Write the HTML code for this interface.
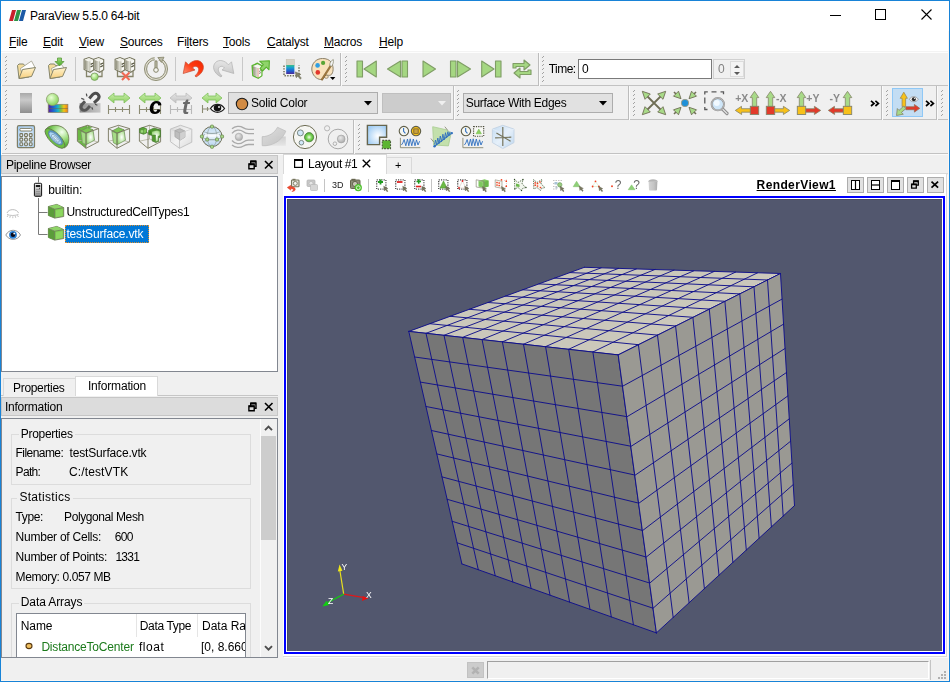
<!DOCTYPE html>
<html>
<head>
<meta charset="utf-8">
<title>ParaView 5.5.0 64-bit</title>
<style>
*{box-sizing:border-box;margin:0;padding:0}
html,body{width:950px;height:682px;overflow:hidden;background:#f0f0f0}
body{font-family:"Liberation Sans","DejaVu Sans",sans-serif;font-size:12px;color:#000;position:relative}
.abs{position:absolute}
svg{position:absolute;overflow:visible}
#win{position:absolute;left:0;top:0;width:950px;height:682px;background:#f0f0f0;overflow:hidden}
#frame{position:absolute;left:0;top:0;width:950px;height:682px;border:1px solid #1883d7;pointer-events:none;z-index:50}
#title{position:absolute;left:1px;top:1px;width:948px;height:30px;background:#fff}
#title .t{position:absolute;left:29px;top:7px;font-size:12px;line-height:16px;white-space:nowrap;letter-spacing:-0.25px}
#menu{position:absolute;left:1px;top:31px;width:948px;height:21px;background:#fff}
#menu span{position:absolute;top:3px;font-size:12px;line-height:16px;white-space:nowrap;letter-spacing:-0.2px}
#menu u{text-decoration:underline;text-underline-offset:1px}
.tbrow{position:absolute;left:1px;width:948px;height:34px;background:#f0f0f0;border-bottom:1px solid #c2c2c2;box-shadow:0 1px 0 #fafafa}
.grip{position:absolute;width:2px;height:26px;top:4px;background:repeating-linear-gradient(to bottom,#a2a2a2 0,#a2a2a2 1px,transparent 1px,transparent 4px) 1px 0/1px 100% no-repeat,repeating-linear-gradient(to bottom,#a2a2a2 0,#a2a2a2 1px,transparent 1px,transparent 4px) 0 1px/1px 25px no-repeat}
.vsep{position:absolute;width:1px;height:24px;top:5px;background:#c8c8c8}
.tsep{position:absolute;width:1px;height:34px;top:0;background:#bcbcbc;box-shadow:1px 0 0 #fafafa}
.ico{position:absolute;width:24px;height:24px;top:5px}
.lbl{position:absolute;white-space:nowrap;line-height:14px;font-size:12px;filter:grayscale(1)}
.dock{position:absolute;left:1px;width:277px;height:19px;background:#dcdcdc;border:1px solid #c6c6c6}
.gb{position:absolute;border:1px solid #dcdcdc}
.gbl{position:absolute;background:#f0f0f0;padding:0 2px;white-space:nowrap;line-height:14px;filter:grayscale(1)}
svg text{filter:grayscale(1)}
</style>
</head>
<body>
<div id="win">
 <div id="title">
  <svg style="left:8px;top:9px" width="17" height="12" viewBox="0 0 17 12"><path d="M3 0h4L4 11H0z" fill="#c8202c"/><path d="M8 0h4L9 11H5z" fill="#2e9447"/><path d="M13 0h4l-3 11h-4z" fill="#1c5aa6"/></svg>
  <div class="t">ParaView 5.5.0 64-bit</div>
  <svg style="left:829px;top:14px" width="12" height="2"><path d="M0 .5h11" stroke="#000" stroke-width="1"/></svg>
  <svg style="left:874px;top:8px" width="12" height="12"><rect x=".5" y=".5" width="10" height="10" fill="none" stroke="#000"/></svg>
  <svg style="left:920px;top:8px" width="12" height="12"><path d="M.5 .5l10 10M10.500 .5l-10 10" stroke="#000" stroke-width="1.1" fill="none"/></svg>
 </div>
 <div id="menu">
  <span style="left:8px"><u>F</u>ile</span>
  <span style="left:42px"><u>E</u>dit</span>
  <span style="left:78px"><u>V</u>iew</span>
  <span style="left:119px"><u>S</u>ources</span>
  <span style="left:176px">Fi<u>l</u>ters</span>
  <span style="left:222px"><u>T</u>ools</span>
  <span style="left:266px"><u>C</u>atalyst</span>
  <span style="left:323px"><u>M</u>acros</span>
  <span style="left:378px"><u>H</u>elp</span>
 </div>

 <svg width="0" height="0" style="left:0;top:0"><defs>
  <linearGradient id="gFold" x1="0" y1="0" x2="0" y2="1"><stop offset="0" stop-color="#fff3cf"/><stop offset="1" stop-color="#f7cf7d"/></linearGradient>
  <linearGradient id="gSrv" x1="0" y1="0" x2="1" y2="0"><stop offset="0" stop-color="#8f8f80"/><stop offset=".5" stop-color="#f4f4ee"/><stop offset="1" stop-color="#a5a596"/></linearGradient>
  <linearGradient id="gSrvL" x1="0" y1="0" x2="1" y2="0"><stop offset="0" stop-color="#8d8c78"/><stop offset="1" stop-color="#eeeee6"/></linearGradient>
  <linearGradient id="gGray" x1="0" y1="0" x2="0" y2="1"><stop offset="0" stop-color="#a9a9a9"/><stop offset=".35" stop-color="#c9c9c9"/><stop offset="1" stop-color="#8e8e8e"/></linearGradient>
  <linearGradient id="gRain" x1="0" y1="0" x2="1" y2="0"><stop offset="0" stop-color="#5a189a"/><stop offset=".25" stop-color="#1f5fd0"/><stop offset=".5" stop-color="#19b3c8"/><stop offset=".65" stop-color="#7cc043"/><stop offset=".8" stop-color="#f2c318"/><stop offset="1" stop-color="#f07a12"/></linearGradient>
  <linearGradient id="gGrn" x1="0" y1="0" x2="0" y2="1"><stop offset="0" stop-color="#c9efad"/><stop offset="1" stop-color="#8fd062"/></linearGradient>
  <linearGradient id="gGrn2" x1="0" y1="0" x2="0" y2="1"><stop offset="0" stop-color="#9ad978"/><stop offset="1" stop-color="#4aa82a"/></linearGradient>
  <linearGradient id="gCS" x1="0" y1="0" x2="0" y2="1"><stop offset="0" stop-color="#3bbf8a"/><stop offset=".3" stop-color="#1aa0d0"/><stop offset=".65" stop-color="#1f5fd0"/><stop offset="1" stop-color="#4a2a9a"/></linearGradient>
  <linearGradient id="gLnk" x1="0" y1="0" x2="1" y2="0"><stop offset="0" stop-color="#8c8c8c"/><stop offset=".6" stop-color="#b4b4b4"/><stop offset="1" stop-color="#c6c6c6"/></linearGradient>
  <linearGradient id="gGryA" x1="0" y1="0" x2="0" y2="1"><stop offset="0" stop-color="#e6e6e6"/><stop offset="1" stop-color="#c2c2c2"/></linearGradient>
  <linearGradient id="gRed" x1="0" y1="1" x2="1" y2="0"><stop offset="0" stop-color="#ffa48c"/><stop offset=".55" stop-color="#ff3a10"/><stop offset="1" stop-color="#f02800"/></linearGradient>
  <linearGradient id="gBlu" x1="0" y1="0" x2="0" y2="1"><stop offset="0" stop-color="#e2effb"/><stop offset="1" stop-color="#9cc6ee"/></linearGradient>
  <radialGradient id="gDome" cx=".7" cy=".3" r=".6"><stop offset="0" stop-color="#f4fff0"/><stop offset=".5" stop-color="#a5e088"/><stop offset="1" stop-color="#58b234"/></radialGradient>
  <radialGradient id="gGloss" cx=".55" cy=".5" r=".6"><stop offset="0" stop-color="#ffffff"/><stop offset="1" stop-color="#8fd46a"/></radialGradient>
  <linearGradient id="gSub" x1="0" y1="0" x2="1" y2="1"><stop offset="0" stop-color="#d9d9d9"/><stop offset=".5" stop-color="#f2f2f2"/><stop offset="1" stop-color="#dcdcdc"/></linearGradient>
  <linearGradient id="gSph" x1="0" y1="0" x2="0" y2="1"><stop offset="0" stop-color="#bcd8f0"/><stop offset=".5" stop-color="#e8f2fa"/><stop offset="1" stop-color="#b4d2ee"/></linearGradient>
  <linearGradient id="gWarp2" x1="0" y1="0" x2="1" y2="1"><stop offset="0" stop-color="#dedede"/><stop offset="1" stop-color="#c2c2c2"/></linearGradient>
  <linearGradient id="gWarp" x1="0" y1="0" x2="0" y2="1"><stop offset="0" stop-color="#cfcfcf"/><stop offset="1" stop-color="#e6e6e6"/></linearGradient>
  <linearGradient id="gPrb" x1="0" y1="0" x2="1" y2="1"><stop offset="0" stop-color="#c4dcf2"/><stop offset=".5" stop-color="#e6f0fa"/><stop offset="1" stop-color="#bcd6ee"/></linearGradient>
  <radialGradient id="gCalc" cx=".55" cy=".55" r=".65"><stop offset="0" stop-color="#ffffff"/><stop offset="1" stop-color="#a3cbf0"/></radialGradient>
  <radialGradient id="gBall" cx=".4" cy=".35" r=".7"><stop offset="0" stop-color="#e9ffd6"/><stop offset="1" stop-color="#7fce4e"/></radialGradient>
  <radialGradient id="gBall2" cx=".5" cy=".5" r=".55"><stop offset="0" stop-color="#f0ffe8"/><stop offset=".5" stop-color="#7fd45a"/><stop offset="1" stop-color="#3fa324"/></radialGradient>
  <radialGradient id="gGBall" cx=".4" cy=".35" r=".7"><stop offset="0" stop-color="#e8e8e8"/><stop offset="1" stop-color="#a9a9a9"/></radialGradient>
  <radialGradient id="gSq" cx=".55" cy=".55" r=".6"><stop offset="0" stop-color="#ffffff"/><stop offset="1" stop-color="#a3cef4"/></radialGradient>
 </defs></svg>
<div class="tbrow" style="top:52px;height:34px"><svg style="left:13px;top:5px" width="24" height="24" viewBox="0 0 24 24"><path d="M3.500 8.500L5 7h4.500l1 1.500H15V20L5 21.500z" fill="#f3dc9c" stroke="#85846a"/><path d="M6.500 11.500L17.500 4l3.500 6.500L8 17z" fill="#fff" stroke="#9d9c88" stroke-width=".8"/><path d="M5 21.500L8.500 12.500 21.500 10.500 17.500 19.500z" fill="url(#gFold)" stroke="#85846a" stroke-linejoin="round"/></svg><svg style="left:44px;top:5px" width="24" height="24" viewBox="0 0 24 24"><path d="M3.500 8.500L5 7h4.500l1 1.500H15V20L5 21.500z" fill="#f3dc9c" stroke="#85846a"/><path d="M6.500 11.500L16 7l3 4L8 17z" fill="#fff" stroke="#9d9c88" stroke-width=".8"/><path d="M5 21.500L8.500 12.500 21.500 10.500 17.500 19.500z" fill="url(#gFold)" stroke="#85846a" stroke-linejoin="round"/><path d="M12.500 1h4v3.500h2.500L14.500 9 10 4.500h2.500z" fill="url(#gGrn2)" stroke="#5a9a3c" stroke-width=".8"/></svg><div class="vsep" style="left:74px"></div><svg style="left:81px;top:5px" width="24" height="24" viewBox="0 0 24 24"><path d="M4.500 14v5.500h15.500V14" fill="none" stroke="#85846a" stroke-width="1.300"/><g transform="translate(0 0)"><path d="M2.100 2.300L7 .6 12 2.700V12.800L8 15.300 2.100 12.400z" fill="#fbfbf7" stroke="#77765e" stroke-width="1.100" stroke-linejoin="miter"/><path d="M2.700 2.900L7.600 4.600v10L2.700 12.100z" fill="url(#gSrvL)"/><path d="M3 2.500L7 1.300 11.200 2.900 7.800 4.100z" fill="#eeeee6"/><path d="M8.600 7.400l2.900-1.400M8.600 9.900l2.900-1.400" stroke="#55543f" stroke-width="1.200"/><path d="M7.900 4.300v10.700" stroke="#9a9984" stroke-width=".7"/></g><g transform="translate(9.7 0)"><path d="M2.100 2.300L7 .6 12 2.700V12.800L8 15.300 2.100 12.400z" fill="#fbfbf7" stroke="#77765e" stroke-width="1.100" stroke-linejoin="miter"/><path d="M2.700 2.900L7.600 4.600v10L2.700 12.100z" fill="url(#gSrvL)"/><path d="M3 2.500L7 1.300 11.200 2.900 7.800 4.100z" fill="#eeeee6"/><path d="M8.600 7.400l2.900-1.400M8.600 9.900l2.900-1.400" stroke="#55543f" stroke-width="1.200"/><path d="M7.900 4.300v10.700" stroke="#9a9984" stroke-width=".7"/></g><circle cx="12.600" cy="19.700" r="3.700" fill="url(#gBall)" stroke="#7a9a62" stroke-width=".8"/></svg><svg style="left:112px;top:5px" width="24" height="24" viewBox="0 0 24 24"><path d="M4.500 14v5.500h15.500V14" fill="none" stroke="#85846a" stroke-width="1.300"/><g transform="translate(0 0)"><path d="M2.100 2.300L7 .6 12 2.700V12.800L8 15.300 2.100 12.400z" fill="#fbfbf7" stroke="#77765e" stroke-width="1.100" stroke-linejoin="miter"/><path d="M2.700 2.900L7.600 4.600v10L2.700 12.100z" fill="url(#gSrvL)"/><path d="M3 2.500L7 1.300 11.200 2.900 7.800 4.100z" fill="#eeeee6"/><path d="M8.600 7.400l2.900-1.400M8.600 9.900l2.900-1.400" stroke="#55543f" stroke-width="1.200"/><path d="M7.900 4.300v10.700" stroke="#9a9984" stroke-width=".7"/></g><g transform="translate(9.7 0)"><path d="M2.100 2.300L7 .6 12 2.700V12.800L8 15.300 2.100 12.400z" fill="#fbfbf7" stroke="#77765e" stroke-width="1.100" stroke-linejoin="miter"/><path d="M2.700 2.900L7.600 4.600v10L2.700 12.100z" fill="url(#gSrvL)"/><path d="M3 2.500L7 1.300 11.200 2.900 7.800 4.100z" fill="#eeeee6"/><path d="M8.600 7.400l2.900-1.400M8.600 9.900l2.900-1.400" stroke="#55543f" stroke-width="1.200"/><path d="M7.900 4.300v10.700" stroke="#9a9984" stroke-width=".7"/></g><path d="M9 15.500l7.500 7.500M16.500 15.500L9 23" stroke="#f06a54" stroke-width="2.100"/></svg><svg style="left:143px;top:5px" width="24" height="24" viewBox="0 0 24 24"><circle cx="12" cy="12" r="10.500" fill="none" stroke="#dedccf" stroke-width="2.400"/><circle cx="12" cy="12" r="11.500" fill="none" stroke="#85846a" stroke-width=".9"/><circle cx="12" cy="12" r="9.400" fill="none" stroke="#85846a" stroke-width=".9"/><path d="M10.500 -1h5l-1 5.500h-3.500z" fill="#f0f0f0"/><path d="M13.800 .6l6.200-.4-2.600 5.200-1.200-2z" fill="#b9b8a4" stroke="#85846a" stroke-width=".8" stroke-linejoin="round"/><path d="M12 4.800v7" stroke="#85846a" stroke-width="3" stroke-linecap="round"/><path d="M12 5v7" stroke="#b9b8a4" stroke-width="1.300" stroke-linecap="round"/><circle cx="12" cy="13" r="2.300" fill="#f4f4ee" stroke="#85846a" stroke-width="1"/></svg><div class="vsep" style="left:174px"></div><svg style="left:180px;top:5px" width="24" height="24" viewBox="0 0 24 24"><path d="M2.200 16.500L4.500 4.800 7.500 7.800C11 3.500 17 2 20.500 5.500 24 9 23 16 15 20L14 18.800C18 15.500 18.500 11.500 16.500 10 14.500 8.500 12.500 9.500 11.500 11L14 13z" fill="url(#gRed)" stroke="#c8482c" stroke-width=".7" stroke-linejoin="round"/></svg><svg style="left:211px;top:5px" width="24" height="24" viewBox="0 0 24 24"><g transform="translate(24 0) scale(-1 1)"><path d="M2.200 16.500L4.500 4.800 7.500 7.800C11 3.500 17 2 20.500 5.500 24 9 23 16 15 20L14 18.800C18 15.500 18.500 11.500 16.500 10 14.500 8.500 12.500 9.500 11.500 11L14 13z" fill="url(#gGryA)" stroke="#b0b0b0" stroke-width=".7" stroke-linejoin="round"/></g></svg><div class="vsep" style="left:241px"></div><svg style="left:248px;top:5px" width="24" height="24" viewBox="0 0 24 24"><path d="M3.200 8.600L8.500 6.300l4.300 2.300v10L9.200 21.200 3.900 18.600z" fill="#f6f6f2" stroke="#5cb531" stroke-width="1.500" stroke-linejoin="round"/><path d="M3.900 9L9 11v9.500L4.500 18.300z" fill="url(#gSrvL)"/><path d="M9.300 11l3-1.800v9.300l-3 2z" fill="#fbfbf8"/><path d="M9.100 11v9.500" stroke="#e07a6a" stroke-width=".7"/><path d="M10 14.500l2-1M10 16.500l2-1" stroke="#6f6e58" stroke-width=".8"/><path d="M10.700 4.200L20.400 3.800 20 12.800 17.300 10.200 13.500 14 11 11.500 14.300 7.700z" fill="#8fd46a" stroke="#57b02e" stroke-width="1.100" stroke-linejoin="round"/></svg><svg style="left:279px;top:5px" width="24" height="24" viewBox="0 0 24 24"><rect x="6.200" y="2.300" width="8.200" height="6" fill="#d9d3c6" stroke="#c4beb0" stroke-width=".5"/><rect x="6.200" y="8" width="8.200" height="9" fill="url(#gCS)"/><path d="M4 8.500v10.300h15V8.500" fill="none" stroke="#6f6e58" stroke-width="1.500" stroke-dasharray="1.400 1.300"/><path d="M15.500 14.900l.8 5.800 1.500-1.600 2.500 3 1-.9-2.500-3 2-.8z" fill="#85846a" stroke="#6a6952" stroke-width=".6" stroke-linejoin="round"/></svg><svg style="left:310px;top:5px" width="24" height="24" viewBox="0 0 24 24"><path d="M11.500 1.500C5 1.500 .8 6.500 .8 12c0 6 5 10.500 9 10.500 2.200 0 2.800-1.500 3.300-2.800.6-1.500 1.800-1.700 3.200-1.500 1.500.2 3.300 .5 4.500-1.200C22.800 14 22.500 8.500 20 5 18 2.500 15 1.500 11.500 1.500z" fill="#f9e2bd" stroke="#8b8067" stroke-width="1"/><ellipse cx="15.300" cy="19.800" rx="2" ry="1.500" fill="#f9e2bd" stroke="#8b8067" stroke-width=".8"/><circle cx="6.600" cy="8.400" r="2.300" fill="#2f9fe2"/><circle cx="12.100" cy="5.900" r="2.100" fill="#5aa536"/><circle cx="6.800" cy="15.400" r="2.300" fill="#e2362a"/><path d="M19.300 8L10 22.600l1.300 .8L20.600 8.800z" fill="#a87c3e" stroke="#6e5225" stroke-width=".5"/><path d="M18.800 8.500C18.500 6 20 3.500 22.300 2.500c.5 2.500-.3 5-1.800 7z" fill="#f4f4f4" stroke="#85846a" stroke-width=".7"/></svg><div class="tsep" style="left:339px"></div><div class="grip" style="left:344px"></div><svg style="left:353.5px;top:5px" width="24" height="24" viewBox="0 0 24 24"><rect x="2" y="4" width="5.500" height="16" fill="#a5d782" stroke="#7f9d65" stroke-width="1.100" stroke-linejoin="round"/><path d="M21.300 4v16L9 12z" fill="#a5d782" stroke="#7f9d65" stroke-width="1.100" stroke-linejoin="round"/></svg><svg style="left:384.5px;top:5px" width="24" height="24" viewBox="0 0 24 24"><path d="M14.500 4v16L1.500 12z" fill="#a5d782" stroke="#7f9d65" stroke-width="1.100" stroke-linejoin="round"/><rect x="16" y="4" width="5.500" height="16" fill="#a5d782" stroke="#7f9d65" stroke-width="1.100" stroke-linejoin="round"/></svg><svg style="left:415.5px;top:5px" width="24" height="24" viewBox="0 0 24 24"><path d="M6 4v16l12.500-8z" fill="#a5d782" stroke="#7f9d65" stroke-width="1.100" stroke-linejoin="round"/></svg><svg style="left:446.5px;top:5px" width="24" height="24" viewBox="0 0 24 24"><rect x="2.500" y="4" width="5.500" height="16" fill="#a5d782" stroke="#7f9d65" stroke-width="1.100" stroke-linejoin="round"/><path d="M9.500 4v16l13-8z" fill="#a5d782" stroke="#7f9d65" stroke-width="1.100" stroke-linejoin="round"/></svg><svg style="left:477.5px;top:5px" width="24" height="24" viewBox="0 0 24 24"><path d="M2.700 4v16l12.300-8z" fill="#a5d782" stroke="#7f9d65" stroke-width="1.100" stroke-linejoin="round"/><rect x="16.500" y="4" width="5.500" height="16" fill="#a5d782" stroke="#7f9d65" stroke-width="1.100" stroke-linejoin="round"/></svg><svg style="left:508.5px;top:5px" width="24" height="24" viewBox="0 0 24 24"><path d="M3 11V6.500h11V3l6 5-6 5V9.500H6V11z" fill="#a5d782" stroke="#7f9d65" stroke-width="1.100" stroke-linejoin="round"/><path d="M21 13v4.500H10V21l-6-5 6-5v3.500h8V13z" fill="#a5d782" stroke="#7f9d65" stroke-width="1.100" stroke-linejoin="round"/></svg><div class="tsep" style="left:537px"></div><div class="grip" style="left:541px"></div><div class="grip" style="left:4px"></div><svg style="left:329px;top:25px" width="6" height="4"><path d="M0 0h5.400L2.700 3z" fill="#000"/></svg>
<div class="lbl" style="left:547.8px;top:10px;letter-spacing:-0.57px">Time:</div>
<div class="abs" style="left:577px;top:7px;width:134px;height:20px;background:#fff;border:1px solid #7a7a7a"><div class="lbl" style="left:3px;top:2px">0</div></div>
<div class="abs" style="left:712px;top:7px;width:32px;height:20px;background:#f0f0f0;border:1px solid #d0d0d0"><div class="lbl" style="left:4px;top:2px;color:#838383">0</div>
<div class="abs" style="left:16px;top:1px;width:14px;height:16px;border:1px solid #dcdcdc;background:#f4f4f4"></div>
<svg style="left:19px;top:4px" width="8" height="12"><path d="M1 4l3-3 3 3zM1 8l3 3 3-3z" fill="#5a5a5a"/></svg></div>
</div>
<div class="tbrow" style="top:86px;height:34px"><div class="grip" style="left:4px"></div><svg style="left:13px;top:5px" width="24" height="24" viewBox="0 0 24 24"><rect x="6" y="2" width="12" height="20" fill="url(#gGray)"/></svg><svg style="left:44px;top:5px" width="24" height="24" viewBox="0 0 24 24"><rect x="3.200" y="13.300" width="19.700" height="8.200" fill="url(#gRain)" stroke="#85846a" stroke-width=".7"/><path d="M3.200 17.400h19.700" stroke="#6a6952" stroke-width=".7" opacity=".8"/><circle cx="7.500" cy="8.500" r="6.100" fill="url(#gBall)" stroke="#8a9a6a" stroke-width=".8"/></svg><svg style="left:75.5px;top:5px" width="24" height="24" viewBox="0 0 24 24"><rect x="2.600" y="12.200" width="20.900" height="9.400" fill="url(#gLnk)"/><path d="M2.600 17h20.900" stroke="#d0d0d0" stroke-width=".5" opacity=".6"/><path d="M12.300 7.500L15.500 3.800c1.500-1.700 3.800-2 5.300-.7 1.600 1.400 1.500 3.500.2 5.100L17 11.800" fill="none" stroke="#4d4d4d" stroke-width="3" stroke-linecap="butt"/><path d="M8 10.300L5.200 13.300c-1.500 1.700-1.600 3.800-.2 5.100 1.500 1.400 3.700 1.200 5.200-.4l2.800-3.100" fill="none" stroke="#565656" stroke-width="3" stroke-linecap="butt"/><path d="M9.300 2.700l.7 2.700M4.300 7.400l3 1.100M18.100 13.200l2.300 1M14.700 16.200l1 2.400" stroke="#4a4a4a" stroke-width="1.200"/></svg><svg style="left:106px;top:5px" width="24" height="24" viewBox="0 0 24 24"><path d="M1 7l6-5v3h10V2l6 5-6 5V9H7v3z" fill="url(#gGrn)" stroke="#7fbf5a" stroke-width=".8" stroke-linejoin="round"/><path d="M1.500 14v9M22.500 14v9M1.500 18.500h21M8.500 16v5M15.500 16v5" stroke="#8c8b73" stroke-width="1.100" fill="none"/></svg><svg style="left:137px;top:5px" width="24" height="24" viewBox="0 0 24 24"><path d="M1 7l6-5v3h10V2l6 5-6 5V9H7v3z" fill="url(#gGrn)" stroke="#7fbf5a" stroke-width=".8" stroke-linejoin="round"/><path d="M1.500 14v9M22.500 14v9M1.500 18.500h21M8.500 16v5M15.500 16v5" stroke="#8c8b73" stroke-width="1.100" fill="none"/><text x="11" y="22.500" font-family="Liberation Sans,sans-serif" font-weight="bold" font-style="italic" font-size="23" fill="#000">c</text></svg><svg style="left:168px;top:5px" width="24" height="24" viewBox="0 0 24 24"><path d="M1 7l6-5v3h10V2l6 5-6 5V9H7v3z" fill="url(#gGryA)" stroke="#bdbdbd" stroke-width=".8" stroke-linejoin="round"/><path d="M1.500 14v9M22.500 14v9M1.500 18.500h21M8.500 16v5M15.500 16v5" stroke="#b9b9b9" stroke-width="1.100" fill="none"/><text x="13" y="22.500" font-family="Liberation Sans,sans-serif" font-weight="bold" font-style="italic" font-size="22" fill="#6a6a6a">t</text></svg><svg style="left:199.5px;top:5px" width="24" height="24" viewBox="0 0 24 24"><path d="M1 7l6-5v3h8V2l6 5-6 5V9H7v3z" fill="url(#gGrn)" stroke="#7fbf5a" stroke-width=".8" stroke-linejoin="round"/><path d="M1.500 14v8M1.500 18h7M6.500 16v4" stroke="#8c8b73" stroke-width="1.100" fill="none"/><path d="M9.500 17.500c3.500-5.500 10.500-5.500 14 0-3.500 5-10.500 5-14 0z" fill="#fff" stroke="#222" stroke-width="1.300"/><ellipse cx="16.500" cy="17" rx="3.800" ry="3.200" fill="#111"/><circle cx="18" cy="16" r=".9" fill="#fff"/></svg><div class="tsep" style="left:452px"></div><div class="grip" style="left:456px"></div><div class="tsep" style="left:627px"></div><div class="grip" style="left:632px"></div><svg style="left:641px;top:5px" width="24" height="24" viewBox="0 0 24 24"><path d="M4 4l16 16M20 4L4 20" stroke="#6f6e55" stroke-width="1.800"/><path d="M.3 .3L8.300 3 3 8.300z" fill="#a8da88" stroke="#6f6e55" stroke-width=".9" stroke-linejoin="round"/><path d="M23.700 .3L15.700 3 21 8.300z" fill="#a8da88" stroke="#6f6e55" stroke-width=".9" stroke-linejoin="round"/><path d="M.3 23.700L8.300 21 3 15.700z" fill="#a8da88" stroke="#6f6e55" stroke-width=".9" stroke-linejoin="round"/><path d="M23.700 23.700L15.700 21 21 15.700z" fill="#a8da88" stroke="#6f6e55" stroke-width=".9" stroke-linejoin="round"/></svg><svg style="left:672px;top:5px" width="24" height="24" viewBox="0 0 24 24"><path d="M1 1l4 4M23 1l-4 4M1 23l4-4M23 23l-4-4" stroke="#6f6e55" stroke-width="1.600"/><path d="M8 7.700L.5 5.200 5.500 .2z" fill="#a8da88" stroke="#6f6e55" stroke-width=".9" stroke-linejoin="round"/><path d="M16 7.700l7.500-2.500-5-5z" fill="#a8da88" stroke="#6f6e55" stroke-width=".9" stroke-linejoin="round"/><path d="M8 16.300L.5 18.800l5 5z" fill="#a8da88" stroke="#6f6e55" stroke-width=".9" stroke-linejoin="round"/><path d="M16 16.300l7.500 2.500-5 5z" fill="#a8da88" stroke="#6f6e55" stroke-width=".9" stroke-linejoin="round"/><circle cx="12" cy="12" r="3.700" fill="#1e90d8" stroke="#a89a78" stroke-width=".8"/></svg><svg style="left:703px;top:5px" width="24" height="24" viewBox="0 0 24 24"><path d="M.8 3.500V.8h3M7.500 .8h5M16.500 .8h3v2.500M.8 6.500v6M.8 16v2.500h2.700" fill="none" stroke="#5a5a5a" stroke-width="1.300"/><path d="M18.500 18l4.500 4.500" stroke="#8a8a8a" stroke-width="3.200" stroke-linecap="round"/><path d="M18.500 18l4.500 4.500" stroke="#e4e4e4" stroke-width="1.200" stroke-linecap="round"/><circle cx="13.800" cy="13.200" r="6.200" fill="#cfe6f8" stroke="#8f8f8f" stroke-width="1.900"/><circle cx="13.800" cy="13.200" r="6.200" fill="none" stroke="#d9d9d9" stroke-width=".6"/><circle cx="12.800" cy="12" r="3" fill="#f4fbff" opacity=".9"/></svg><svg style="left:734px;top:5px" width="24" height="24" viewBox="0 0 24 24"><text x="0.2" y="10.800" font-family="Liberation Sans,sans-serif" font-weight="bold" font-size="10.500" fill="#8a8a8a">+X</text><path d="M17.3 15.500V6.600h-2.100L19.5 .3 23.8 6.600h-2.100V15.500z" fill="#a8da88" stroke="#85846a" stroke-width=".8" stroke-linejoin="round"/><path d="M15.5 17.700h-9v-2.400L.3 19.400l6.300 4.100v-2.300h9z" fill="#f7c11a" stroke="#85846a" stroke-width=".8" stroke-linejoin="round"/><rect x="15.3" y="15.300" width="8.400" height="8.200" fill="#e23a2a" stroke="#85846a" stroke-width=".9"/></svg><svg style="left:765px;top:5px" width="24" height="24" viewBox="0 0 24 24"><text x="10" y="10.800" font-family="Liberation Sans,sans-serif" font-weight="bold" font-size="10.500" fill="#8a8a8a">-X</text><path d="M2.3 15.500V6.600h-2.100L4.5 .3 8.8 6.600h-2.100V15.500z" fill="#a8da88" stroke="#85846a" stroke-width=".8" stroke-linejoin="round"/><path d="M8.4 17.700h9v-2.400l6.300 4.100-6.300 4.100v-2.300h-9z" fill="#f7c11a" stroke="#85846a" stroke-width=".8" stroke-linejoin="round"/><rect x="0.3" y="15.300" width="8.400" height="8.200" fill="#e23a2a" stroke="#85846a" stroke-width=".9"/></svg><svg style="left:796px;top:5px" width="24" height="24" viewBox="0 0 24 24"><text x="9.3" y="10.800" font-family="Liberation Sans,sans-serif" font-weight="bold" font-size="10.500" fill="#8a8a8a">+Y</text><path d="M2.3 15.500V6.600h-2.100L4.5 .3 8.8 6.600h-2.100V15.500z" fill="#a8da88" stroke="#85846a" stroke-width=".8" stroke-linejoin="round"/><path d="M8.4 17.700h9v-2.400l6.300 4.100-6.300 4.100v-2.300h-9z" fill="#e23a2a" stroke="#85846a" stroke-width=".8" stroke-linejoin="round"/><rect x="0.3" y="15.300" width="8.400" height="8.200" fill="#f7c11a" stroke="#85846a" stroke-width=".9"/></svg><svg style="left:827px;top:5px" width="24" height="24" viewBox="0 0 24 24"><text x="1.5" y="10.800" font-family="Liberation Sans,sans-serif" font-weight="bold" font-size="10.500" fill="#8a8a8a">-Y</text><path d="M17.3 15.500V6.600h-2.100L19.5 .3 23.8 6.600h-2.100V15.500z" fill="#a8da88" stroke="#85846a" stroke-width=".8" stroke-linejoin="round"/><path d="M15.5 17.700h-9v-2.400L.3 19.400l6.300 4.100v-2.300h9z" fill="#e23a2a" stroke="#85846a" stroke-width=".8" stroke-linejoin="round"/><rect x="15.3" y="15.300" width="8.400" height="8.200" fill="#f7c11a" stroke="#85846a" stroke-width=".9"/></svg><div class="tsep" style="left:880px"></div><div class="grip" style="left:885px"></div><div class="tsep" style="left:935px"></div><div class="grip" style="left:940px"></div><div class="abs" style="left:227px;top:6px;width:150px;height:22px;background:#e1e1e1;border:1px solid #adadad">
<svg style="left:6px;top:4px" width="14" height="14"><circle cx="7" cy="7" r="5.700" fill="#d18b44" stroke="#1a1a1a" stroke-width="1.100"/></svg>
<div class="lbl" style="left:22px;top:3px;letter-spacing:-0.21px">Solid Color</div>
<svg style="left:135px;top:8px" width="9" height="5"><path d="M0 0h8L4 4.500z" fill="#000"/></svg></div>
<div class="abs" style="left:381px;top:7px;width:69px;height:20px;background:#cccccc;border:1px solid #bfbfbf">
<svg style="left:55px;top:7px" width="9" height="5"><path d="M0 0h8L4 4.500z" fill="#f0f0f0"/></svg></div>
<div class="abs" style="left:462px;top:7px;width:150px;height:20px;background:#e1e1e1;border:1px solid #adadad">
<div class="lbl" style="left:1.7px;top:2px;letter-spacing:-0.3px">Surface With Edges</div>
<svg style="left:135px;top:7px" width="9" height="5"><path d="M0 0h8L4 4.500z" fill="#000"/></svg></div>
<svg style="left:869px;top:14px" width="10" height="7"><path d="M1 .8l3 2.600-3 2.600M5.400 .8l3 2.600-3 2.600" fill="none" stroke="#000" stroke-width="1.700"/></svg>
<div class="abs" style="left:891px;top:2px;width:31px;height:29px;background:#c3ddf3;border:1px solid #8fc8f6"></div>
<svg style="left:924px;top:14px" width="10" height="7"><path d="M1 .8l3 2.600-3 2.600M5.400 .8l3 2.600-3 2.600" fill="none" stroke="#000" stroke-width="1.700"/></svg>
<svg style="left:894px;top:5px" width="24" height="24" viewBox="0 0 24 24"><path d="M7.100 15.600V7.300H5.200L8.800 1.200 12.400 7.300h-1.800v8.300z" fill="#f7c11a" stroke="#a08a4a" stroke-width=".8" stroke-linejoin="round"/><path d="M10.900 15.800h8.500v-2.300l5.300 3.800-5.300 3.800v-2.400h-8.500z" fill="#e23a2a" stroke="#9a6a50" stroke-width=".8" stroke-linejoin="round"/><path d="M8.500 15.300L4 19.400 2.300 17.500 1.500 24.500 8.300 23.200 6.400 21.400 11 17.500z" fill="#a8da88" stroke="#85846a" stroke-width=".8" stroke-linejoin="round"/><path d="M14.300 8.300c2.200-3.600 6.800-3.600 9 0-2.200 3.300-6.800 3.300-9 0z" fill="#f4f4f4" stroke="#8a8a8a" stroke-width=".7"/><circle cx="18.800" cy="8.200" r="2" fill="#2a2a2a"/><circle cx="19.500" cy="7.500" r=".6" fill="#fff"/></svg></div>
<div class="tbrow" style="top:120px;height:34px"><div class="grip" style="left:4px"></div><svg style="left:13px;top:5px" width="24" height="24" viewBox="0 0 24 24"><rect x="3.400" y=".7" width="17.100" height="22" rx="1.500" fill="url(#gCalc)" stroke="#7f7e66" stroke-width="1.200"/><rect x="5.800" y="3.400" width="12.200" height="2.600" rx="1.300" fill="#fff" stroke="#7f7e66" stroke-width="1"/><rect x="5.9" y="8.6" width="2.800" height="3" rx=".9" fill="#dfe8f0" stroke="#77765e" stroke-width="1.100"/><rect x="5.9" y="13.15" width="2.800" height="3" rx=".9" fill="#dfe8f0" stroke="#77765e" stroke-width="1.100"/><rect x="5.9" y="17.7" width="2.800" height="3" rx=".9" fill="#dfe8f0" stroke="#77765e" stroke-width="1.100"/><rect x="10.6" y="8.6" width="2.800" height="3" rx=".9" fill="#dfe8f0" stroke="#77765e" stroke-width="1.100"/><rect x="10.6" y="13.15" width="2.800" height="3" rx=".9" fill="#dfe8f0" stroke="#77765e" stroke-width="1.100"/><rect x="10.6" y="17.7" width="2.800" height="3" rx=".9" fill="#dfe8f0" stroke="#77765e" stroke-width="1.100"/><rect x="15.3" y="8.6" width="2.800" height="3" rx=".9" fill="#dfe8f0" stroke="#77765e" stroke-width="1.100"/><rect x="15.3" y="13.15" width="2.800" height="3" rx=".9" fill="#dfe8f0" stroke="#77765e" stroke-width="1.100"/><rect x="15.3" y="17.7" width="2.800" height="3" rx=".9" fill="#dfe8f0" stroke="#77765e" stroke-width="1.100"/></svg><svg style="left:44px;top:5px" width="24" height="24" viewBox="0 0 24 24"><path d="M.7 4.300C5-1.500 17-1 21.500 6c4 6.500 2.500 15-2.400 17z" fill="url(#gDome)" stroke="#6f7f55" stroke-width=".9"/><ellipse cx="9.900" cy="13.400" rx="5.200" ry="13" transform="rotate(-45 9.900 13.400)" fill="#6cbf42" stroke="#667a50" stroke-width=".9"/><ellipse cx="10.600" cy="12.700" rx="3.900" ry="9.300" transform="rotate(-45 10.600 12.700)" fill="#4f9fe0" stroke="#5f7f9a" stroke-width=".6"/><ellipse cx="10.200" cy="13.100" rx="3.300" ry="8.200" transform="rotate(-45 10.200 13.100)" fill="#a9d6f6" stroke="#5f7f9a" stroke-width=".7"/><ellipse cx="10.400" cy="13.300" rx="2" ry="5" transform="rotate(-45 10.400 13.300)" fill="#c9e6fa" stroke="#6f8faa" stroke-width=".7"/><ellipse cx="10.500" cy="13.400" rx=".9" ry="2.400" transform="rotate(-45 10.500 13.400)" fill="#e6f4fd" stroke="#7f9fba" stroke-width=".6"/></svg><svg style="left:75px;top:5px" width="24" height="24" viewBox="0 0 24 24"><path d="M1.400 3.600L11.500 .3 16.500 2.300 4.900 6.100 6.400 17.700 10 19.700V23.300L1.400 16.200z" fill="#6ab844"/><path d="M11.500 .3V14L1.400 16.200M11.500 14l11.100 3.200" fill="none" stroke="#b4b4a0" stroke-width=".8"/><path d="M4.900 6.100L11.500 2.600 17 4.800 10 8.500z" fill="#7cc653"/><path d="M4.900 6.100L10 8.500V19.700L6.400 17.700z" fill="#a5dc86"/><path d="M10 8.500L17 4.800 18.500 15.200 10 19.700z" fill="url(#gGloss)"/><path d="M4.900 6.100L11.500 2.600 17 4.800 18.500 15.200 10 19.700 6.400 17.700zM4.900 6.100L10 8.500 17 4.800M10 8.500V19.700" fill="none" stroke="#6a8a55" stroke-width=".7" stroke-linejoin="round"/><path d="M1.400 3.600L11.500 .3 22.600 3.600V16.700L10 23.300 1.400 16.200zM1.400 3.600L10 8.100 22.600 3.600M10 8.100V23.300" fill="none" stroke="#77765e" stroke-width=".9" stroke-linejoin="round"/></svg><svg style="left:106px;top:5px" width="24" height="24" viewBox="0 0 24 24"><path d="M11.500 .3V14L1.400 16.200M11.500 14l11.100 3.200" fill="none" stroke="#b4b4a0" stroke-width=".8"/><path d="M4.900 6.100L11.500 2.600 17 4.800 10 8.500z" fill="#7cc653"/><path d="M4.900 6.100L10 8.500V19.700L6.400 17.700z" fill="#a5dc86"/><path d="M10 8.500L17 4.800 18.500 15.200 10 19.700z" fill="url(#gGloss)"/><path d="M4.900 6.100L11.500 2.600 17 4.800 18.500 15.200 10 19.700 6.400 17.700zM4.900 6.100L10 8.500 17 4.800M10 8.500V19.700" fill="none" stroke="#6a8a55" stroke-width=".7" stroke-linejoin="round"/><path d="M1.400 3.600L11.500 .3 22.600 3.600V16.700L10 23.300 1.400 16.200zM1.400 3.600L10 8.100 22.600 3.600M10 8.100V23.300" fill="none" stroke="#77765e" stroke-width=".9" stroke-linejoin="round"/></svg><svg style="left:137px;top:5px" width="24" height="24" viewBox="0 0 24 24"><path d="M11.500 .3V14L1.400 16.200M11.500 14l11.100 3.200" fill="none" stroke="#b4b4a0" stroke-width=".8"/><path d="M1.400 3.600L11.500 .3 22.600 3.600V16.700L10 23.300 1.400 16.200zM1.400 3.600L10 8.100 22.600 3.600M10 8.100V23.300" fill="none" stroke="#77765e" stroke-width=".9" stroke-linejoin="round"/><path d="M1.600 4L5 2.300 8.600 3.800V8L5.500 9.300 1.600 7.800z" fill="#5aa836" stroke="#4a7a35" stroke-width=".7" stroke-linejoin="round"/><path d="M2.300 4.800h3.400v3.200H2.300z" fill="#9ad978" stroke="#4a7a35" stroke-width=".5"/><path d="M6 4.800l2-.8v3.200l-2 .9z" fill="#7cc653"/><path d="M10.600 5.500L16 3l6.500 2v7l-1.800 1v3.200L18 17.500 14.200 16V10.500L10.600 9.500z" fill="#4f9a2e" stroke="#4a7a35" stroke-width=".7" stroke-linejoin="round"/><path d="M13.500 6.500l5.500-1.300 3 1v4.300l-1.800.8V16l-2.700 1V10h-4z" fill="url(#gGloss)" stroke="#4a7a35" stroke-width=".5"/><path d="M11.200 6l2.300.6V10l-2.300-.8z" fill="#3f8a20"/></svg><svg style="left:168px;top:5px" width="24" height="24" viewBox="0 0 24 24"><path d="M1.400 4.100L11.500 .3 22.800 4.100V17.200L10.500 23.300 1.400 16.700z" fill="url(#gSub)" stroke="#bdbdbd" stroke-width=".9" stroke-linejoin="round"/><path d="M10.500 15.200V23.300" stroke="#bdbdbd" stroke-width=".8"/><path d="M1.400 4.100l4.500 1.600M22.800 4.100L16 6.300" stroke="#cfcfcf" stroke-width=".7"/><path d="M5.900 5.600L11 3.600 16 6.100V12.200L11 15.200 5.900 11.700z" fill="#bcbcbc" stroke="#a5a5a5" stroke-width=".7" stroke-linejoin="round"/><path d="M5.900 5.600L11 8 16 6.100M11 8v7.200" fill="none" stroke="#a5a5a5" stroke-width=".7"/><path d="M11 8L16 6.100V12.200L11 15.200z" fill="#d9d9d9" opacity=".7"/></svg><svg style="left:199px;top:5px" width="24" height="24" viewBox="0 0 24 24"><circle cx="12" cy="11.600" r="10" fill="url(#gSph)" stroke="#6f6e55" stroke-width="1"/><ellipse cx="12" cy="11.600" rx="4.800" ry="10" fill="none" stroke="#8f9f9f" stroke-width=".7"/><path d="M3.500 6.500c5 2.500 12 2.500 17 0M3.500 16.700c5-2.500 12-2.500 17 0" fill="none" stroke="#8f9f9f" stroke-width=".7"/><ellipse cx="12" cy="11.600" rx="10" ry="3" fill="none" stroke="#8f9f9f" stroke-width=".7"/><path d="M5 8.200c4 1.600 10 1.600 14 0v2.500c-4 1.500-10 1.500-14 0z" fill="#fff" opacity=".7"/><rect x="10.5" y="0.1" width="3" height="3" rx=".9" fill="#a8da88" stroke="#6f8a55" stroke-width=".8"/><rect x="10.5" y="20.3" width="3" height="3" rx=".9" fill="#a8da88" stroke="#6f8a55" stroke-width=".8"/><rect x="0.4" y="10" width="3" height="3" rx=".9" fill="#a8da88" stroke="#6f8a55" stroke-width=".8"/><rect x="20.6" y="10" width="3" height="3" rx=".9" fill="#a8da88" stroke="#6f8a55" stroke-width=".8"/><rect x="5.7" y="13" width="3" height="3" rx=".9" fill="#a8da88" stroke="#6f8a55" stroke-width=".8"/><rect x="15.5" y="13" width="3" height="3" rx=".9" fill="#a8da88" stroke="#6f8a55" stroke-width=".8"/></svg><svg style="left:230px;top:5px" width="24" height="24" viewBox="0 0 24 24"><path d="M1 3.800C4 1.200 9 .6 12 2.600c2 1.300 3.500 1.700 5.500 1.700H23M1 8.300C4 4.800 9 4.200 12 6.500c2 1.500 3.500 2.100 5.500 2.100H23M1 15.500c3 3.500 8 4.100 11 1.800 2-1.500 3.500-2.100 5.500-2.100H23M1 20c3 2.600 8 3.200 11 1.200 2-1.300 3.500-1.700 5.500-1.700H23" fill="none" stroke="#a9a9a9" stroke-width="1.300"/><circle cx="7.900" cy="11.900" r="3.700" fill="url(#gGBall)" stroke="#a9a9a9" stroke-width=".7"/></svg><svg style="left:261px;top:5px" width="24" height="24" viewBox="0 0 24 24"><path d="M.2 11.500h23.600v9.300H.2z" fill="url(#gWarp)"/><path d="M.2 11.700C7 11.500 12.500 8 15.500 2.300l8.300 3.800C21 13.500 14 19.500 4 20.700H.2z" fill="url(#gWarp2)" stroke="#bcbcbc" stroke-width=".8" opacity=".95"/></svg><svg style="left:292px;top:5px" width="24" height="24" viewBox="0 0 24 24"><circle cx="12" cy="12" r="11.600" fill="#f6f6f2" stroke="#6f6e55" stroke-width="1"/><circle cx="16.100" cy="12.200" r="4.600" fill="url(#gBall2)" stroke="#4e7f3e" stroke-width=".8"/><circle cx="7.400" cy="7.900" r="3" fill="#d2e8f8" stroke="#6f7f7a" stroke-width=".9"/><circle cx="8.400" cy="17.700" r="2.300" fill="#d2e8f8" stroke="#6f7f7a" stroke-width=".9"/></svg><svg style="left:323px;top:5px" width="24" height="24" viewBox="0 0 24 24"><circle cx="14" cy="14" r="9.800" fill="none" stroke="#a9a9a9" stroke-width="1"/><circle cx="17.200" cy="14" r="3.900" fill="url(#gGBall)" stroke="#a5a5a5" stroke-width=".7"/><circle cx="3.100" cy="3.300" r="2.600" fill="none" stroke="#b0b0b0" stroke-width=".9"/><circle cx="10.900" cy="18.700" r="1.800" fill="none" stroke="#a9a9a9" stroke-width=".9"/></svg><div class="tsep" style="left:352px"></div><div class="grip" style="left:357px"></div><svg style="left:366px;top:5px" width="24" height="24" viewBox="0 0 24 24"><path d="M.4 .4H19.600V12.200H12.600V19.600H.4z" fill="url(#gSq)" stroke="#66654e" stroke-width="1.400"/><rect x="15.300" y="15.400" width="8.200" height="8.200" fill="#5cb531"/><rect x="15.300" y="15.400" width="8.200" height="8.200" fill="none" stroke="#4a5a3a" stroke-width="1.100" stroke-dasharray="1.800 1.200"/></svg><svg style="left:397px;top:5px" width="24" height="24" viewBox="0 0 24 24"><circle cx="5.9" cy="6.100" r="4.700" fill="#f6f6f0" stroke="#5f5e48" stroke-width="1.100"/><path d="M5.6 3v3.300l1.800 2" fill="none" stroke="#2f6fc0" stroke-width="1.100"/><circle cx="18" cy="6.100" r="4.700" fill="#f7c11a" stroke="#5f5e48" stroke-width="1.100"/><rect x="15.800" y="3.900" width="4.400" height="4.400" fill="#b8923a" stroke="#6a5a30" stroke-width=".7"/><path d="M16.500 5h3M16.500 6.200h3M16.500 7.300h3" stroke="#e0b84a" stroke-width=".5"/><path d="M2.4 12.800V22.700H22.300" fill="none" stroke="#8a8972" stroke-width=".9"/><path d="M3.400 20l1.400-2 1.300-3.500 1.700 6.300 1.700-6.800 1.300 6.800 1.400-7 1.600 7 1.500-6.800 1.700 6.800 1.500-6 1.500 5.200 1.600-3.800" fill="none" stroke="#2f6fc0" stroke-width=".9" stroke-linejoin="round"/></svg><svg style="left:428.5px;top:5px" width="24" height="24" viewBox="0 0 24 24"><path d="M2.700 1.700L16.400 4.800 21.100 8.100 18.400 20.900 3.600 20z" fill="#c3e0ac" stroke="#a8cc90" stroke-width=".8"/><path d="M.9 13.500l2.700 3.400M14.800 1.700l3 3.700" stroke="#6f6e55" stroke-width=".7"/><path d="M4.500 21.300L21.800 8.100" stroke="#2f6fc0" stroke-width="1.100"/><path d="M4.500 19.500l1-4.500 1 5 1.300-7 1.200 5.500 1.300-7.500 1.200 5.800 1.400-7.600 1.200 5.800 1.400-7.300 1 5.300 1.400-6.300 .9 4.300 1.300-4.300" fill="none" stroke="#2f6fc0" stroke-width=".9" stroke-linejoin="round"/><circle cx="4.500" cy="21.300" r="1.200" fill="#2f6fc0"/><circle cx="21.800" cy="8.100" r="1.200" fill="#2f6fc0"/></svg><svg style="left:459.5px;top:5px" width="24" height="24" viewBox="0 0 24 24"><circle cx="4.95" cy="6.100" r="4.700" fill="#f6f6f0" stroke="#5f5e48" stroke-width="1.100"/><path d="M4.65 3v3.300l1.800 2" fill="none" stroke="#2f6fc0" stroke-width="1.100"/><rect x="12.600" y="1.600" width="10.100" height="9.700" fill="#f8f8f4" stroke="#4a4a3a" stroke-width="1.100" stroke-dasharray="1.200 1.100"/><path d="M15.100 8.800l2.700-4.700 2.600 4.700z" fill="#8fd062" stroke="#6ab844" stroke-width=".5"/><path d="M1.9 12.800V22.700H22.300" fill="none" stroke="#8a8972" stroke-width=".9"/><path d="M3.400 20l1.400-2 1.300-3.500 1.700 6.300 1.700-6.800 1.300 6.800 1.400-7 1.600 7 1.500-6.800 1.700 6.800 1.500-6 1.500 5.200 1.600-3.800" fill="none" stroke="#2f6fc0" stroke-width=".9" stroke-linejoin="round"/></svg><svg style="left:490px;top:5px" width="24" height="24" viewBox="0 0 24 24"><path d="M1.400 4.100L11.800 .3 23 4.100V17.600L11.800 23.600 1.400 17.600z" fill="url(#gPrb)" stroke="#c3d3e3" stroke-width=".9" stroke-linejoin="round"/><path d="M1.400 4.100L11.800 8.500 23 4.100M11.800 8.500v15" fill="none" stroke="#e4eef8" stroke-width=".8"/><path d="M11.800 2.100V20.900M4.100 12.800l16.200-.6M5.400 8.100l14.200 8.100" stroke="#75745c" stroke-width="1.200"/></svg></div>
 <!-- Pipeline browser dock -->
 
 <div class="dock" style="top:155px"><div class="lbl" style="left:4.1px;top:2px;letter-spacing:-0.32px">Pipeline Browser</div>
  <svg style="left:246px;top:4px" width="10" height="10"><path d="M2.700 1.200h5.300v5h-5.300z" fill="#d9d9d9" stroke="#000" stroke-width="1.400"/><path d="M.9 4h5.300v4.800H.9z" fill="#d9d9d9" stroke="#000" stroke-width="1.400"/><path d="M.9 4.300h5.300M2.700 1.500h5.300" stroke="#000" stroke-width="1.800"/></svg>
  <svg style="left:262px;top:4px" width="10" height="10"><path d="M1 1l7.500 7.500M8.500 1L1 8.500" stroke="#000" stroke-width="1.600" fill="none"/></svg>
 </div>
 <div class="abs" style="left:1px;top:176px;width:277px;height:196px;background:#fff;border:1px solid #828790"><div class="abs" style="left:1px;top:0;width:274px;height:194px">
  <svg style="left:0;top:0" width="274" height="70">
   <path d="M35.500 0v5.500M35.500 21v36.500h9M35.500 35.500h9" stroke="#7a7a7a" fill="none"/>
   <!-- server icon -->
   <rect x="31.400" y="6.300" width="7.200" height="13" rx=".8" fill="url(#gSv)" stroke="#111" stroke-width="1"/>
   <rect x="32.800" y="8" width="4.400" height="2" fill="#1a1a1a"/><path d="M33 12.500h4M33 14.500h4M33 16.500h4" stroke="#8a8a8a" stroke-width=".7"/><rect x="36" y="10.800" width="1" height="1" fill="#333"/>
   <defs><linearGradient id="gSv" x1="0" y1="0" x2="0" y2="1"><stop offset="0" stop-color="#f4f4f4"/><stop offset="1" stop-color="#8c8c8c"/></linearGradient></defs>
   <!-- cube icons -->
   <g transform="translate(45,27)"><path d="M.4 2.500L8.800 .4 15.700 3.600V12.500L6.700 14.100 .4 11.500z" fill="#7fce50" stroke="#6f7a5a" stroke-width=".9" stroke-linejoin="round"/><path d="M.4 2.500L6.700 5.200V14.100L.4 11.500z" fill="#5b9c3a"/><path d="M.4 2.500L8.800 .4 15.700 3.600 6.700 5.200z" fill="#8fd468"/><path d="M.4 2.500L6.700 5.200 15.700 3.600M6.700 5.200V14.100" fill="none" stroke="#6f7a5a" stroke-width=".8"/><path d="M8 6.500l6.500-1.200v6.500L8 13z" fill="#93dc66" opacity=".7"/></g>
   <g transform="translate(45,49)"><path d="M.4 2.500L8.800 .4 15.700 3.600V12.500L6.700 14.100 .4 11.500z" fill="#7fce50" stroke="#6f7a5a" stroke-width=".9" stroke-linejoin="round"/><path d="M.4 2.500L6.700 5.200V14.100L.4 11.500z" fill="#5b9c3a"/><path d="M.4 2.500L8.800 .4 15.700 3.600 6.700 5.200z" fill="#8fd468"/><path d="M.4 2.500L6.700 5.200 15.700 3.600M6.700 5.200V14.100" fill="none" stroke="#6f7a5a" stroke-width=".8"/><path d="M8 6.500l6.500-1.200v6.500L8 13z" fill="#93dc66" opacity=".7"/></g>
   <!-- closed eye -->
   <path d="M4 36c1.500-4.500 10-4.500 11.500 0" stroke="#b4b4b4" fill="none" stroke-width=".9"/><path d="M4 37.300c2.500 1.600 9 1.600 11.500 0M5 38.300l-.9 1.700M7.300 39l-.5 1.800M9.800 39.300v1.900M12.200 39l.5 1.800M14.500 38.300l.9 1.700" stroke="#b4b4b4" fill="none" stroke-width=".8"/>
   <!-- open eye -->
   <path d="M2.800 58c3.200-6.300 11.500-6.300 14.700 0-3.200 5.800-11.500 5.800-14.700 0z" fill="#fff" stroke="#8a8a8a" stroke-width=".9"/>
   <circle cx="10" cy="57.800" r="3.900" fill="#2a80d4"/><circle cx="10" cy="57.800" r="2.300" fill="#0a0a1a"/><circle cx="11.200" cy="56.600" r=".9" fill="#fff"/>
  </svg>
  <div class="lbl" style="left:45.2px;top:6px;letter-spacing:-0.07px">builtin:</div>
  <div class="lbl" style="left:63.4px;top:28px;letter-spacing:-0.23px">UnstructuredCellTypes1</div>
  <div class="abs" style="left:62px;top:48px;width:84px;height:18px;background:#0078d7;outline:1px dotted #e08f2c;outline-offset:-1px"></div>
  <div class="lbl" style="left:63.4px;top:50px;color:#fff;letter-spacing:-0.16px">testSurface.vtk</div>
 </div></div>
 <!-- tabs -->
 <div class="abs" style="left:1px;top:395px;width:277px;height:1px;background:#c6c6c6"></div>
 <div class="abs" style="left:3px;top:378px;width:73px;height:18px;background:#f0f0f0;border:1px solid #d9d9d9;border-bottom:none"><div class="lbl" style="left:9.1px;top:2px;letter-spacing:-0.34px">Properties</div></div>
 <div class="abs" style="left:75px;top:376px;width:83px;height:20px;background:#fff;border:1px solid #d9d9d9;border-bottom:none"><div class="lbl" style="left:11.9px;top:2px;letter-spacing:-0.17px">Information</div></div>
 <div class="dock" style="top:397px"><div class="lbl" style="left:2.9px;top:2px;letter-spacing:-0.23px">Information</div>
  <svg style="left:246px;top:4px" width="10" height="10"><path d="M2.700 1.200h5.300v5h-5.300z" fill="#d9d9d9" stroke="#000" stroke-width="1.400"/><path d="M.9 4h5.300v4.800H.9z" fill="#d9d9d9" stroke="#000" stroke-width="1.400"/><path d="M.9 4.300h5.300M2.700 1.500h5.300" stroke="#000" stroke-width="1.800"/></svg>
  <svg style="left:262px;top:4px" width="10" height="10"><path d="M1 1l7.500 7.500M8.500 1L1 8.500" stroke="#000" stroke-width="1.600" fill="none"/></svg>
 </div>
 <!-- info scroll area -->
 <div class="abs" style="left:1px;top:418px;width:277px;height:240px;background:#f0f0f0;border:1px solid #828790;overflow:hidden"><div class="abs" style="left:1px;top:0;width:274px;height:238px">
  <div class="gb" style="left:8px;top:15px;width:240px;height:51px"></div>
  <div class="gbl" style="left:15.8px;top:8px;letter-spacing:-0.29px">Properties</div>
  <div class="lbl" style="left:12.6px;top:27px;letter-spacing:-0.56px">Filename:</div><div class="lbl" style="left:66.6px;top:27px;letter-spacing:-0.17px">testSurface.vtk</div>
  <div class="lbl" style="left:12.6px;top:46px;letter-spacing:-0.68px">Path:</div><div class="lbl" style="left:66px;top:46px;letter-spacing:0.13px">C:/testVTK</div>
  <div class="gb" style="left:8px;top:79px;width:240px;height:91px"></div>
  <div class="gbl" style="left:14.4px;top:71px;letter-spacing:0.31px">Statistics</div>
  <div class="lbl" style="left:12.6px;top:91px;letter-spacing:-0.41px">Type:</div><div class="lbl" style="left:61.1px;top:91px;letter-spacing:-0.41px">Polygonal Mesh</div>
  <div class="lbl" style="left:12.6px;top:111px;letter-spacing:-0.24px">Number of Cells:</div><div class="lbl" style="left:111.8px;top:111px;letter-spacing:-0.7px">600</div>
  <div class="lbl" style="left:12.6px;top:131px;letter-spacing:-0.27px">Number of Points:</div><div class="lbl" style="left:112.4px;top:131px;letter-spacing:-0.7px">1331</div>
  <div class="lbl" style="left:12.6px;top:151px;letter-spacing:-0.39px">Memory: 0.057 MB</div>
  <div class="gb" style="left:8px;top:184px;width:240px;height:80px"></div>
  <div class="gbl" style="left:15.8px;top:176px;letter-spacing:-0.11px">Data Arrays</div>
  <div class="abs" style="left:13px;top:194px;width:230px;height:60px;background:#fff;border:1px solid #828790;overflow:hidden">
   <div class="abs" style="left:119px;top:0;width:1px;height:23px;background:#e5e5e5"></div>
   <div class="abs" style="left:180px;top:0;width:1px;height:23px;background:#e5e5e5"></div>
   <div class="lbl" style="left:3.8px;top:5px;letter-spacing:-0.11px">Name</div>
   <div class="lbl" style="left:122.8px;top:5px;letter-spacing:-0.36px">Data Type</div>
   <div class="lbl" style="left:185px;top:5px">Data Range</div>
   <svg style="left:8px;top:28px" width="8" height="8"><ellipse cx="4" cy="4" rx="3" ry="2.600" fill="#f0c060" stroke="#5a3a10" stroke-width="1.100"/></svg>
   <div class="lbl" style="left:24.4px;top:26px;color:#1b7a1b;filter:none;opacity:.999;letter-spacing:-0.19px">DistanceToCenter</div>
   <div class="lbl" style="left:121.9px;top:26px;letter-spacing:0.58px">float</div>
   <div class="lbl" style="left:184px;top:26px">[0, 8.66025]</div>
  </div>
  <!-- scrollbar -->
  <div class="abs" style="left:257px;top:0;width:18px;height:238px;background:#f0f0f0;border-left:1px solid #fcfcfc"></div>
  <div class="abs" style="left:258px;top:17px;width:15px;height:104px;background:#cdcdcd"></div>
  <svg style="left:261px;top:6px" width="9" height="7"><path d="M1 5.200L4.500 1.700 8 5.200" stroke="#4d4d4d" stroke-width="1.900" fill="none"/></svg>
  <svg style="left:261px;top:226px" width="9" height="7"><path d="M1 1.200L4.500 4.700 8 1.200" stroke="#4d4d4d" stroke-width="1.900" fill="none"/></svg>
 </div></div>
 <!-- layout tabs -->
 <div class="abs" style="left:283px;top:173px;width:666px;height:1px;background:#d9d9d9"></div>
 <div class="abs" style="left:386px;top:157px;width:26px;height:17px;background:#f0f0f0;border:1px solid #d9d9d9;border-bottom:none"><div class="lbl" style="left:8px;top:0px;font-size:11px">+</div></div>
 <div class="abs" style="left:283px;top:154px;width:104px;height:20px;background:#fff;border:1px solid #d9d9d9;border-bottom:none">
  <svg style="left:10px;top:4px" width="10" height="10"><rect x=".6" y=".6" width="7.800" height="7.800" fill="#fff" stroke="#000" stroke-width="1.200"/><path d="M0 1h9" stroke="#000" stroke-width="2"/></svg>
  <div class="lbl" style="left:24.1px;top:2px;letter-spacing:-0.38px">Layout #1</div>
  <svg style="left:78px;top:4px" width="9" height="9"><path d="M.7 .7l7.500 7.500M8.200 .7L.7 8.200" stroke="#000" stroke-width="1.300" fill="none"/></svg>
 </div>
 <!-- view container -->
 <div class="abs" style="left:283px;top:174px;width:664px;height:483px;background:#fff;border-right:1px solid #dadada;border-bottom:1px solid #dadada;box-shadow:1px 1px 0 #fbfbfb">
  <!--VIEWTB--><svg style="left:3px;top:4px" width="14" height="14" viewBox="0 0 14 14"><rect x="5.500" y="2" width="7.500" height="6.800" rx=".8" fill="#e4e4dc" stroke="#77765e" stroke-width="1.100"/><rect x="6.500" y=".8" width="3" height="1.500" fill="#77765e"/><circle cx="9.300" cy="5.400" r="2" fill="#f4f4f0" stroke="#77765e" stroke-width=".9"/><path d="M1.200 9.500l3.600-2.200v1.500c2.500-.3 4.500.8 4.500 2.500 0 1.500-1.700 2.300-3.500 2.100 1.300-.4 1.800-1.100 1.500-1.900-.3-.7-1.200-1-2.500-.8v1.500z" fill="#ee4a30" stroke="#d8381f" stroke-width=".4"/></svg><svg style="left:22px;top:4px" width="14" height="14" viewBox="0 0 14 14"><rect x="2" y="2" width="8" height="6.500" rx="1" fill="#c9c9c9" stroke="#b0b0b0" stroke-width=".7"/><circle cx="6" cy="5.300" r="2" fill="#e6e6e6" stroke="#b0b0b0" stroke-width=".6"/><rect x="5.500" y="6.500" width="7" height="6" rx="1" fill="#d6d6d6" stroke="#b9b9b9" stroke-width=".7"/></svg><svg style="left:66px;top:4px" width="14" height="14" viewBox="0 0 14 14"><rect x="1.500" y="2" width="9.500" height="8.500" rx=".8" fill="#8d8c78" stroke="#66654e" stroke-width="1"/><rect x="2.500" y=".8" width="4" height="1.500" fill="#66654e"/><circle cx="6" cy="6" r="2.600" fill="#c9c8b8" stroke="#55543f" stroke-width=".8"/><circle cx="9.300" cy="9.700" r="3.600" fill="#4fc02e"/><circle cx="9.300" cy="9.700" r="1.900" fill="none" stroke="#e8ffe0" stroke-width=".9"/></svg><svg style="left:91.5px;top:4px" width="14" height="14" viewBox="0 0 14 14"><rect x="1.700" y="1.900" width="9.200" height="9.200" fill="none" stroke="#4a4a4a" stroke-width="1.300" stroke-dasharray="1.150 1.150"/><path d="M3 4h5M5.500 1.500v5" stroke="#1f9a1f" stroke-width="1.800"/><path d="M8.700 8.200l.7 4.700 1.100-1.200 1.600 2.100.8-.6-1.600-2.100 1.700-.5z" fill="#77765e" stroke="#5f5e48" stroke-width=".4" stroke-linejoin="round"/></svg><svg style="left:110.5px;top:4px" width="14" height="14" viewBox="0 0 14 14"><rect x="1.700" y="1.900" width="9.200" height="9.200" fill="none" stroke="#4a4a4a" stroke-width="1.300" stroke-dasharray="1.150 1.150"/><path d="M3 4h5.500" stroke="#e02020" stroke-width="1.800"/><path d="M8.700 8.200l.7 4.700 1.100-1.200 1.600 2.100.8-.6-1.600-2.100 1.700-.5z" fill="#77765e" stroke="#5f5e48" stroke-width=".4" stroke-linejoin="round"/></svg><svg style="left:129.5px;top:4px" width="14" height="14" viewBox="0 0 14 14"><rect x="1.700" y="1.900" width="9.200" height="9.200" fill="none" stroke="#4a4a4a" stroke-width="1.300" stroke-dasharray="1.150 1.150"/><path d="M3.500 3.500h4.500M5.700 1.200v4.500" stroke="#1f9a1f" stroke-width="1.500"/><path d="M3 8.500h5" stroke="#e02020" stroke-width="1.600"/><path d="M8.700 8.200l.7 4.700 1.100-1.200 1.600 2.100.8-.6-1.600-2.100 1.700-.5z" fill="#77765e" stroke="#5f5e48" stroke-width=".4" stroke-linejoin="round"/></svg><svg style="left:154px;top:4px" width="14" height="14" viewBox="0 0 14 14"><rect x="1.700" y="1.900" width="9.200" height="9.200" fill="none" stroke="#4a4a4a" stroke-width="1.300" stroke-dasharray="1.150 1.150"/><path d="M3 10l3.500-7 3.500 7z" fill="#6dbb45" stroke="#4e9a2e" stroke-width=".6"/><path d="M8.700 8.200l.7 4.700 1.100-1.200 1.600 2.100.8-.6-1.600-2.100 1.700-.5z" fill="#77765e" stroke="#5f5e48" stroke-width=".4" stroke-linejoin="round"/></svg><svg style="left:173px;top:4px" width="14" height="14" viewBox="0 0 14 14"><rect x="1.700" y="1.900" width="9.200" height="9.200" fill="none" stroke="#4a4a4a" stroke-width="1.300" stroke-dasharray="1.150 1.150"/><path d="M3 10l3.500-7 3.500 7z" fill="none" stroke="#d8c8b8" stroke-width=".6"/><circle cx="6.500" cy="3" r=".9" fill="#e02020"/><circle cx="3" cy="10" r=".9" fill="#e02020"/><circle cx="10" cy="10" r=".9" fill="#e02020"/><path d="M8.700 8.200l.7 4.700 1.100-1.200 1.600 2.100.8-.6-1.600-2.100 1.700-.5z" fill="#77765e" stroke="#5f5e48" stroke-width=".4" stroke-linejoin="round"/></svg><svg style="left:192px;top:4px" width="14" height="14" viewBox="0 0 14 14"><path d="M3.500 3l6-1.800 4 1.300v6L8 10 3.500 8.500z" fill="#7fc860"/><path d="M8 4.200l5.500-1.700v6L8 10z" fill="#6ab84a"/><path d="M3.500 3L8 4.200v5.800" fill="none" stroke="#a5dc8a" stroke-width=".6"/><path d="M1.200 1.800L9 3.300v7L1.200 9z" fill="none" stroke="#8a8a7a" stroke-width=".7"/><path d="M7.500 8.500l.7 4.500 1-1.100 1.500 2 .8-.6-1.500-2 1.600-.4z" fill="#77765e" stroke="#5f5e48" stroke-width=".4" stroke-linejoin="round"/></svg><svg style="left:211px;top:4px" width="14" height="14" viewBox="0 0 14 14"><path d="M1.200 1.800L8 3.300v7L1.200 9z" fill="#f8f6f0" stroke="#9a9a8a" stroke-width=".7"/><path d="M8 3.300l4.500-1.500v7L8 10.300" fill="none" stroke="#c9b9a9" stroke-width=".6" stroke-dasharray="1 1"/><circle cx="3" cy="4.5" r=".85" fill="#f04020"/><circle cx="5.2" cy="5" r=".85" fill="#f04020"/><circle cx="3" cy="7" r=".85" fill="#f04020"/><circle cx="5.2" cy="7.5" r=".85" fill="#f04020"/><circle cx="7.5" cy="1.8" r=".85" fill="#f04020"/><circle cx="12.3" cy="3.2" r=".85" fill="#f04020"/><circle cx="12.3" cy="8.2" r=".85" fill="#f04020"/><path d="M7.500 8.500l.7 4.500 1-1.100 1.500 2 .8-.6-1.500-2 1.600-.4z" fill="#77765e" stroke="#5f5e48" stroke-width=".4" stroke-linejoin="round"/></svg><svg style="left:230px;top:4px" width="14" height="14" viewBox="0 0 14 14"><path d="M1.500 1.500L5 4.500 10 1.500 9 6 13 9.500 9.500 10.500 8.500 12.500 5 9.500 1.800 11z" fill="#f2f6ee" stroke="#3f5a35" stroke-width=".8" stroke-dasharray="1.300 1" stroke-linejoin="round"/><path d="M3 5.500l3.500 1v2.500L3 8.500z" fill="#6ab84a"/><circle cx="1.5" cy="1.5" r=".7" fill="#2f4a25"/><circle cx="10" cy="1.5" r=".7" fill="#2f4a25"/><circle cx="13" cy="9.5" r=".7" fill="#2f4a25"/><circle cx="1.8" cy="11" r=".7" fill="#2f4a25"/><circle cx="8.5" cy="12.5" r=".7" fill="#2f4a25"/></svg><svg style="left:249px;top:4px" width="14" height="14" viewBox="0 0 14 14"><path d="M1.500 1.500L5 4.500 10 1.500 9 6 13 9.500 9.500 10.500 8.500 12.500 5 9.500 1.800 11z" fill="#f8f6f0" stroke="#3f5a35" stroke-width=".8" stroke-dasharray="1.300 1" stroke-linejoin="round"/><circle cx="3.2" cy="4.8" r=".85" fill="#f04020"/><circle cx="5.5" cy="5.5" r=".85" fill="#f04020"/><circle cx="3.2" cy="7.2" r=".85" fill="#f04020"/><circle cx="5.5" cy="8" r=".85" fill="#f04020"/><circle cx="8" cy="4" r=".85" fill="#f04020"/><circle cx="8.5" cy="9.5" r=".85" fill="#f04020"/></svg><svg style="left:268px;top:4px" width="14" height="14" viewBox="0 0 14 14"><path d="M2 2.500h10M2 5.500h4M2 8.500h4M2 11h5" stroke="#c4c4c4" stroke-width="1.200" stroke-dasharray="1.500 1"/><rect x="3.500" y="4" width="3" height="2.500" fill="#a9c4d8"/><circle cx="8.800" cy="6.800" r="2.200" fill="#9acc80" stroke="#6a9a5a" stroke-width=".6"/><rect x="4.500" y="8.500" width="2" height="2" fill="#b4c4cc"/><path d="M9 8.300l.7 4.500 1-1.100 1.500 2 .8-.6-1.500-2 1.600-.4z" fill="#77765e" stroke="#5f5e48" stroke-width=".4" stroke-linejoin="round"/></svg><svg style="left:288px;top:4px" width="14" height="14" viewBox="0 0 14 14"><path d="M2.200 8.700L5.600 3.200 9 8.700z" fill="#8fcf78" stroke="#7fc068" stroke-width=".5"/><path d="M8.200 8l.7 4.500 1-1.100 1.500 2 .8-.6-1.500-2 1.600-.4z" fill="#77765e" stroke="#5f5e48" stroke-width=".4" stroke-linejoin="round"/></svg><svg style="left:307px;top:4px" width="14" height="14" viewBox="0 0 14 14"><path d="M2.600 8.500L5.500 3.300 8.900 8.500z" fill="none" stroke="#d8ecd0" stroke-width=".7"/><circle cx="5.500" cy="3.300" r=".9" fill="#f04020"/><circle cx="2.600" cy="8.500" r=".9" fill="#f04020"/><circle cx="8.900" cy="8.500" r=".9" fill="#f04020"/><path d="M8.700 8.300l.7 4.500 1-1.100 1.500 2 .8-.6-1.500-2 1.600-.4z" fill="#77765e" stroke="#5f5e48" stroke-width=".4" stroke-linejoin="round"/></svg><svg style="left:326px;top:4px" width="14" height="14" viewBox="0 0 14 14"><circle cx="3" cy="8.300" r=".95" fill="#f04020"/><text x="5.7" y="11.400" font-family="Liberation Sans,sans-serif" font-size="12" fill="#6a6952">?</text></svg><svg style="left:344px;top:4px" width="14" height="14" viewBox="0 0 14 14"><path d="M1.200 11.700L4.600 6.800 8 11.700z" fill="#8fcf78" stroke="#7fc068" stroke-width=".5"/><text x="6.3" y="11.400" font-family="Liberation Sans,sans-serif" font-size="12" fill="#6a6952">?</text></svg><svg style="left:363px;top:4px" width="14" height="14" viewBox="0 0 14 14"><path d="M2.600 3.500h8.800l-.4 8c0 .7-.5 1.100-1.100 1.100H4.100c-.6 0-1.100-.4-1.100-1.100z" fill="url(#gTr)"/><path d="M2.200 3.800c0-1.500 2-2.600 4.800-2.600s4.800 1.100 4.800 2.600z" fill="#b4b4b4"/><defs><linearGradient id="gTr" x1="0" y1="0" x2="1" y2="0"><stop offset="0" stop-color="#d4d4d4"/><stop offset=".6" stop-color="#c4c4c4"/><stop offset="1" stop-color="#acacac"/></linearGradient></defs></svg><div class="abs" style="left:41px;top:5px;width:1px;height:13px;background:#c4c4c4"></div><div class="abs" style="left:85px;top:5px;width:1px;height:13px;background:#c4c4c4"></div><div class="abs" style="left:148px;top:5px;width:1px;height:13px;background:#c4c4c4"></div><div class="lbl" style="left:49px;top:5px;font-size:9px;line-height:12px;color:#222">3D</div><!--/VIEWTB-->
  <div class="lbl" style="left:473.6px;top:4px;font-weight:bold;font-size:12px;text-decoration:underline;letter-spacing:0.38px">RenderView1</div>
  <!--VIEWBTNS--><div class="abs" style="left:564px;top:3px;width:17px;height:16px;background:#e1e1e1;border:1px solid #adadad"><svg style="left:2px;top:2px" width="11" height="10" viewBox="0 0 11 10"><rect x="1.500" y=".5" width="8" height="9" fill="#fff" stroke="#000"/><path d="M5.500 0v10" stroke="#000" stroke-width="1.200"/></svg></div><div class="abs" style="left:584px;top:3px;width:17px;height:16px;background:#e1e1e1;border:1px solid #adadad"><svg style="left:2px;top:2px" width="11" height="10" viewBox="0 0 11 10"><rect x="1.500" y=".5" width="8" height="9" fill="#fff" stroke="#000"/><path d="M1 5h9" stroke="#000" stroke-width="1.200"/></svg></div><div class="abs" style="left:604px;top:3px;width:17px;height:16px;background:#e1e1e1;border:1px solid #adadad"><svg style="left:2px;top:2px" width="11" height="10" viewBox="0 0 11 10"><rect x="1.500" y=".5" width="8" height="9" fill="#fff" stroke="#000"/><path d="M1 1h9" stroke="#000" stroke-width="2"/></svg></div><div class="abs" style="left:624px;top:3px;width:17px;height:16px;background:#e1e1e1;border:1px solid #adadad"><svg style="left:2px;top:2px" width="11" height="10" viewBox="0 0 11 10"><path d="M3.600 1h4.700v4.200H3.600z" fill="#e1e1e1" stroke="#000" stroke-width="1.300"/><path d="M1.600 4.200h4.700v4H1.600z" fill="#e1e1e1" stroke="#000" stroke-width="1.300"/><path d="M3.600 1.300h4.700M1.600 4.500h4.700" stroke="#000" stroke-width="1.700"/></svg></div><div class="abs" style="left:644px;top:3px;width:17px;height:16px;background:#e1e1e1;border:1px solid #adadad"><svg style="left:2px;top:2px" width="11" height="10" viewBox="0 0 11 10"><path d="M1.500 1.600l6.600 6M8.100 1.600l-6.600 6" stroke="#000" stroke-width="1.700" fill="none"/></svg></div><!--/VIEWBTNS-->
 </div>
 <div class="abs" style="left:284px;top:196px;width:661px;height:458px;border:2px solid #0000ff;background:#fff;padding:1px">
  <div style="position:relative;width:655px;height:452px;background:#52576e;overflow:hidden;box-shadow:inset 1px 1px 0 #474b5f">
   <svg style="left:0;top:0" width="656" height="452" viewBox="0 0 656 452">
    <g stroke="#10108a" stroke-width=".95" fill="none" stroke-linecap="round">
<polygon fill="#cbc8bb" stroke="none" points="121.8,132.4 297.4,68.3 493.5,74.5 331.2,155.9"/>
<path d="M121.8 132.4L331.2 155.9M121.8 132.4L297.4 68.3M142.9 124.7L351.5 145.7M139 134.3L314.2 68.8M163.1 117.3L370.7 136.1M156.9 136.3L331.5 69.4M182.4 110.3L388.8 127M175.5 138.4L349.4 69.9M200.9 103.5L406.1 118.3M194.9 140.6L367.9 70.5M218.6 97.1L422.5 110.1M215.2 142.9L387 71.1M235.7 90.8L438.1 102.3M236.3 145.3L406.8 71.8M252 84.9L452.9 94.9M258.4 147.7L427.3 72.4M267.7 79.1L467.1 87.8M281.6 150.3L448.6 73.1M282.8 73.6L480.6 81M305.8 153L470.6 73.8M297.4 68.3L493.5 74.5M331.2 155.9L493.5 74.5"/>
<polygon fill="#767676" stroke="none" points="121.8,132.4 331.2,155.9 369.4,433.9 174.9,364.9"/>
<path d="M121.8 132.4L174.9 364.9M121.8 132.4L331.2 155.9M139 134.3L191.3 370.7M127.7 158L335.5 187.2M157 136.3L208.2 376.7M133.4 183.1L339.7 217.6M175.7 138.4L225.8 383M139 207.5L343.7 247.2M195.1 140.6L244.1 389.4M144.4 231.5L347.7 276M215.4 142.9L263 396.1M149.8 254.9L351.6 304.1M236.5 145.3L282.6 403.1M155 277.9L355.3 331.4M258.6 147.8L303 410.4M160.2 300.3L359 358M281.7 150.3L324.3 417.9M165.2 322.3L362.5 384M305.9 153.1L346.4 425.7M170.1 343.8L366 409.2M331.2 155.9L369.4 433.9M174.9 364.9L369.4 433.9"/>
<polygon fill="#9a9993" stroke="none" points="331.2,155.9 493.5,74.5 507.5,306.6 369.4,433.9"/>
<path d="M331.2 155.9L369.4 433.9M331.2 155.9L493.5 74.5M351.4 145.8L386.2 418.5M335.5 187.3L495 100.1M370.5 136.2L402.1 403.7M339.7 217.9L496.6 125.1M388.6 127.1L417.4 389.7M343.8 247.5L498 149.5M405.9 118.4L432 376.2M347.8 276.4L499.5 173.5M422.3 110.2L445.9 363.4M351.6 304.4L500.9 196.9M437.9 102.4L459.3 351M355.4 331.7L502.3 219.8M452.8 94.9L472.1 339.2M359 358.3L503.6 242.2M467 87.8L484.4 327.9M362.6 384.2L504.9 264.1M480.5 81L496.2 317M366 409.3L506.2 285.6M493.5 74.5L507.5 306.6M369.4 433.9L507.5 306.6"/>
    </g>
    <!--AXES--><g>
<path d="M56.700 395.100L52.800 371" stroke="#e8e020" stroke-width="1.200"/><path d="M52.600 365.400l2.800 6.400-4.600 .6z" fill="#f0e818"/>
<path d="M56.700 395.100l19 3.200" stroke="#e01818" stroke-width="1.200"/><path d="M81.500 399.300l-6.500 2.600 .6-4.800z" fill="#e81010"/>
<path d="M56.700 395.100l-16 8.500" stroke="#18c018" stroke-width="1.200"/><path d="M35.300 407.500l4.200-5.700 2.600 4.300z" fill="#10d010"/>
<g fill="#fff" font-family="Liberation Sans,sans-serif" font-size="8.500" stroke="none"><text x="54.500" y="371">Y</text><text x="79" y="398.500">X</text><text x="41" y="405">Z</text></g>
</g><!--/AXES-->
   </svg>
  </div>
 </div>
 <!-- status bar -->
 <div class="abs" style="left:467px;top:662px;width:17px;height:16px;background:#cccccc;border:1px solid #c2c2c2">
  <svg style="left:3px;top:3px" width="9" height="9"><path d="M1.300 1.300l6.400 6.400M7.700 1.300L1.300 7.700" stroke="#b2b2b2" stroke-width="2.600"/></svg>
 </div>
 <div class="abs" style="left:487px;top:661px;width:442px;height:18px;background:#f0f0f0;border-top:1px solid #a0a0a0;border-left:1px solid #a0a0a0;border-right:1px solid #fff;border-bottom:1px solid #fff"></div>
 <div class="abs" style="left:930px;top:660px;width:1px;height:20px;background:#c4c4c4"></div>
 <svg style="left:937px;top:670px" width="10" height="10"><g fill="#b0b0b0"><rect x="7" y="1" width="2" height="2"/><rect x="4" y="4" width="2" height="2"/><rect x="7" y="4" width="2" height="2"/><rect x="1" y="7" width="2" height="2"/><rect x="4" y="7" width="2" height="2"/><rect x="7" y="7" width="2" height="2"/></g></svg>
</div>
<div class="abs" style="left:948px;top:31px;width:1px;height:650px;background:#fcf7f2"></div>
<div class="abs" style="left:1px;top:680px;width:948px;height:1px;background:#fcf7f2"></div>
<div class="abs" style="left:1px;top:51px;width:947px;height:1px;background:#f3f3f3"></div>
<div class="abs" style="left:1px;top:52px;width:947px;height:1px;background:#fdfdfd"></div>
<div class="abs" style="left:1px;top:53px;width:1px;height:101px;background:#fcf7f2"></div>
<div id="frame"></div>
</body>
</html>
